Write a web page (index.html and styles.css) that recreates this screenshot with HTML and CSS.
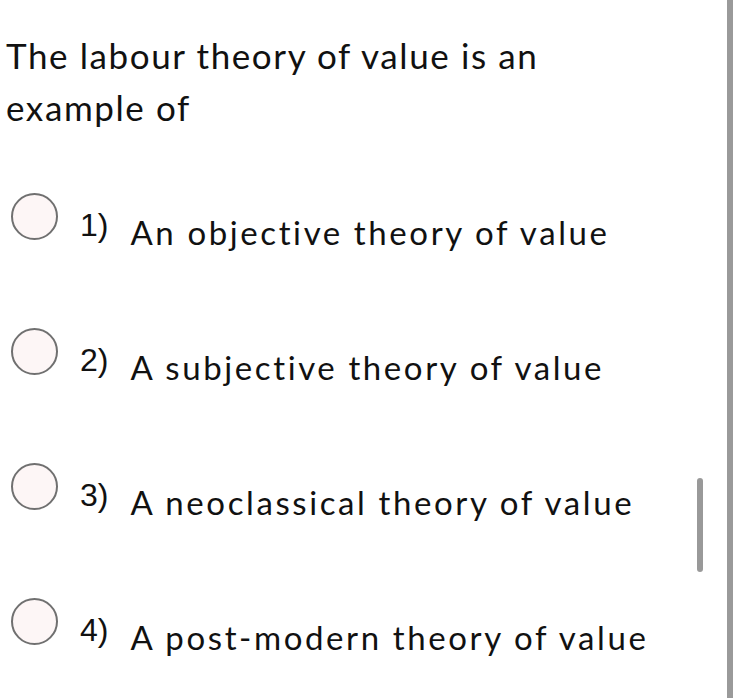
FILE: index.html
```html
<!DOCTYPE html>
<html>
<head>
<meta charset="utf-8">
<link rel="stylesheet" href="styles.css">
</head>
<body>
<div class="page">
  <main class="content">
    <p class="question">The labour theory of value is an example of</p>
    <ul class="options">
      <li class="option"><span class="radio"></span><span class="num">1)</span><span class="label">An objective theory of value</span></li>
      <li class="option"><span class="radio"></span><span class="num">2)</span><span class="label">A subjective theory of value</span></li>
      <li class="option"><span class="radio"></span><span class="num">3)</span><span class="label">A neoclassical theory of value</span></li>
      <li class="option"><span class="radio"></span><span class="num">4)</span><span class="label">A post-modern theory of value</span></li>
    </ul>
    <div class="thumb"></div>
  </main>
  <div class="divider"></div>
</div>
</body>
</html>
```
FILE: styles.css
```css
html, body {
  margin: 0;
  padding: 0;
  background: #ffffff;
}
.page {
  display: flex;
  width: 737px;
  height: 698px;
  padding-right: 4px;
  box-sizing: border-box;
  overflow: hidden;
}
.content {
  position: relative;
  flex: 1;
  padding-left: 6px;
  padding-top: 29px;
}
.question {
  margin: 0;
  width: 570px;
  font-family: "Lato", "Liberation Sans", sans-serif;
  font-size: 35px;
  line-height: 52px;
  letter-spacing: 1.6px;
  font-variant-ligatures: none;
  color: #111111;
}
.options {
  list-style: none;
  margin: 60px 0 0 0;
  padding: 0 0 0 5px;
}
.option {
  display: flex;
  align-items: flex-start;
  height: 135px;
}
.radio {
  width: 47px;
  height: 47px;
  box-sizing: border-box;
  border: 2px solid #707070;
  border-radius: 50%;
  background: #fdf6f6;
  flex: none;
}
.num {
  margin-left: 22px;
  margin-top: 16px;
  font-family: "Liberation Sans", Arial, sans-serif;
  font-size: 32px;
  line-height: 32px;
  color: #111111;
}
.label {
  margin-left: 22px;
  margin-top: 23px;
  font-family: "Lato", "Liberation Sans", sans-serif;
  font-size: 33px;
  line-height: 33px;
  letter-spacing: 2.6px;
  font-variant-ligatures: none;
  color: #111111;
  white-space: nowrap;
}
.thumb {
  position: absolute;
  left: 697px;
  top: 478px;
  width: 6px;
  height: 94px;
  border-radius: 3px;
  background: #999999;
}
.divider {
  width: 6px;
  flex: none;
  background: #9a9a9a;
}
```
